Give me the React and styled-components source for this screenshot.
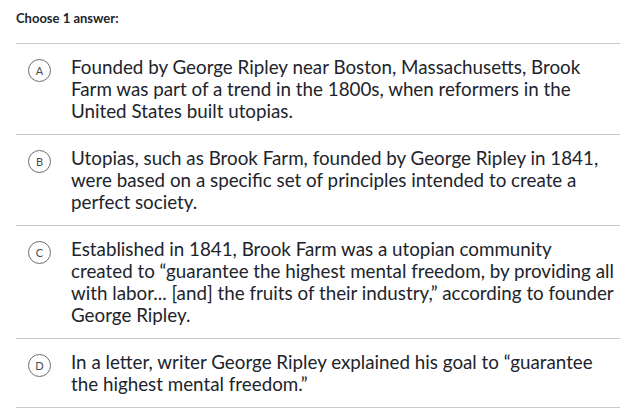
import React from "react";
import styled, { createGlobalStyle } from "styled-components";

const Global = createGlobalStyle`
  html, body { margin: 0; padding: 0; background: #fff; }
  body { font-family: Lato, "Noto Sans", sans-serif; color: #21242c; }
`;

const Page = styled.div`
  padding: 10px 8px 0 16px;
`;

const Prompt = styled.div`
  font-size: 13px;
  font-weight: 700;
  line-height: 16px;
  color: #21242c;
  height: 33px;
`;

const List = styled.ul`
  list-style: none;
  margin: 0;
  padding: 0;
  border-bottom: 1px solid #c9cacc;
`;

const Row = styled.li`
  display: flex;
  align-items: flex-start;
  border-top: 1px solid #c9cacc;
  padding: 12px 0 12px 12px;
`;

const Letter = styled.span`
  flex: none;
  box-sizing: border-box;
  width: 23px;
  height: 23px;
  margin-top: 3px;
  margin-right: 20px;
  border: 1.5px solid #6b6d70;
  border-radius: 50%;
  display: flex;
  align-items: center;
  justify-content: center;
  font-size: 11px;
  font-weight: 400;
  color: #4a4c50;
`;

const Text = styled.div`
  font-size: 18.8px;
  line-height: 22px;
  color: #21242c;
  margin-right: 3.5px;
`;

const answers = [
  ["A", "Founded by George Ripley near Boston, Massachusetts, Brook Farm was part of a trend in the 1800s, when reformers in the United States built utopias."],
  ["B", "Utopias, such as Brook Farm, founded by George Ripley in 1841, were based on a specific set of principles intended to create a perfect society."],
  ["C", "Established in 1841, Brook Farm was a utopian community created to \u201cguarantee the highest mental freedom, by providing all with labor... [and] the fruits of their industry,\u201d according to founder George Ripley."],
  ["D", "In a letter, writer George Ripley explained his goal to \u201cguarantee the highest mental freedom.\u201d"],
];

export default function App() {
  return (
    <>
      <Global />
      <Page>
        <Prompt>Choose 1 answer:</Prompt>
        <List>
          {answers.map(([l, t]) => (
            <Row key={l}>
              <Letter>{l}</Letter>
              <Text>{t}</Text>
            </Row>
          ))}
        </List>
      </Page>
    </>
  );
}
